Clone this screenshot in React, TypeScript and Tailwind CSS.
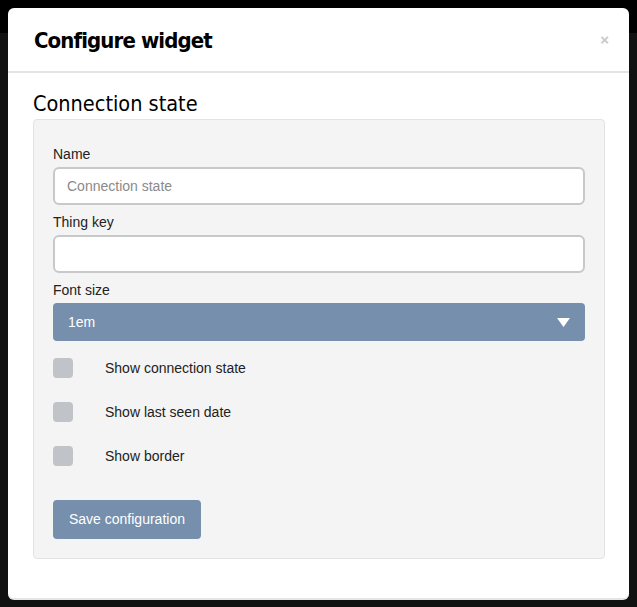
import React from 'react';

const rows = ['Show connection state', 'Show last seen date', 'Show border'];

export default function App() {
  return (
    <div className="min-h-screen w-full bg-[#111111] relative" style={{ height: 607 }}>
      <div className="h-[33px] bg-black" />
      <div className="absolute left-[8px] top-[8px] w-[621px] h-[592px] bg-white rounded-[6px] border-b-[2px] border-[#e5e5e5] font-['Liberation_Sans',Arial,sans-serif]">
        <div className="flex items-center justify-between h-[65px] px-[26px] border-b-[2px] border-[#e5e5e5]">
          <h3 className="text-[22px] font-bold text-black font-['DejaVu_Sans_Condensed','DejaVu_Sans',sans-serif] tracking-[-0.9px] pt-[2px]">
            Configure widget
          </h3>
          <span className="text-[#c8c8c8] text-[15px] font-bold leading-none mr-[-6px]">×</span>
        </div>
        <div className="pl-[25px] pr-[24px] pt-[19px]">
          <h4 className="text-[21.5px] leading-[24px] text-black font-['DejaVu_Sans_Condensed','DejaVu_Sans',sans-serif] font-light mb-[3px]">
            Connection state
          </h4>
          <div className="bg-[#f4f4f4] border border-[#e3e3e3] rounded-[4px] px-[19px] pt-[26px] pb-[19px] text-[14px] text-[#222]">
            <label className="block leading-[16px] mb-[5px]">Name</label>
            <input
              className="block w-full h-[38px] rounded-[6px] border-[2px] border-[#c6c8ca] bg-white px-[12px] text-[14px] outline-none placeholder:text-[#8a8a8a]"
              placeholder="Connection state"
            />
            <label className="block leading-[16px] mt-[9px] mb-[5px]">Thing key</label>
            <input className="block w-full h-[38px] rounded-[6px] border-[2px] border-[#c6c8ca] bg-white px-[12px] text-[14px] outline-none" />
            <label className="block leading-[16px] mt-[9px] mb-[5px]">Font size</label>
            <div className="flex items-center justify-between h-[38px] rounded-[4px] bg-[#758fad] pl-[15px] pr-[15px] text-white text-[14px]">
              <span>1em</span>
              <svg width="13" height="9" viewBox="0 0 13 9">
                <polygon points="0,0 13,0 6.5,9" fill="#ffffff" />
              </svg>
            </div>
            <div className="mt-[17px] flex flex-col gap-[24px]">
              {rows.map((r) => (
                <div key={r} className="flex items-center h-[20px]">
                  <span className="w-[20px] h-[20px] rounded-[4px] bg-[#c0c4c8] shrink-0" />
                  <span className="ml-[32px] text-[14px] text-[#222]">{r}</span>
                </div>
              ))}
            </div>
            <button className="mt-[34px] h-[39px] px-[16px] rounded-[4px] bg-[#758fad] text-white text-[14px]">
              Save configuration
            </button>
          </div>
        </div>
      </div>
    </div>
  );
}
